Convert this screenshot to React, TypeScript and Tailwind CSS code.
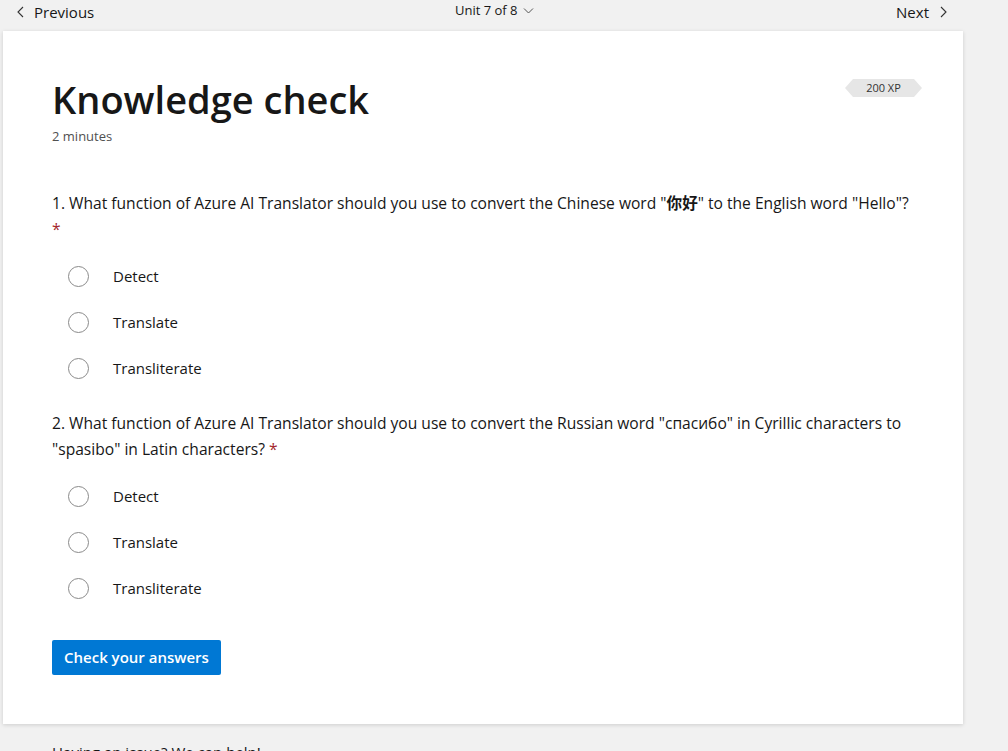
import React from "react";

const font = { fontFamily: '"Open Sans", "Noto Sans CJK SC", sans-serif' };

function Radio({ label }: { label: string }) {
  return (
    <label className="flex items-center h-[46px] pl-[16px]">
      <span className="w-[21px] h-[21px] rounded-full border border-[#8a8a8a] bg-white shrink-0" />
      <span className="ml-[24px] text-[15px] text-[#171717]">{label}</span>
    </label>
  );
}

function Question({ children }: { children: React.ReactNode }) {
  return (
    <div>
      <p className="text-[15.6px] leading-[26px] text-[#171717] font-medium">{children}</p>
      <div className="mt-[12px]">
        <Radio label="Detect" />
        <Radio label="Translate" />
        <Radio label="Transliterate" />
      </div>
    </div>
  );
}

export default function App() {
  return (
    <div className="min-h-[751px] bg-[#f1f1f1] overflow-hidden" style={font}>
      <div className="h-[31px] flex items-start pt-[1px] justify-between pl-[16px] pr-[60px] w-[1008px] relative">
        <div className="flex items-center gap-[8px] text-[15px] text-[#171717] font-medium">
          <svg width="10" height="12" viewBox="0 0 10 12" fill="none" stroke="#333" strokeWidth="1.1">
            <path d="M7 1 L2 6 L7 11" />
          </svg>
          <span>Previous</span>
        </div>
        <div className="absolute left-[455px] top-[1px] flex items-center gap-[5px] text-[13px] text-[#171717]">
          <span>Unit 7 of 8</span>
          <svg width="11" height="8" viewBox="0 0 11 8" fill="none" stroke="#555" strokeWidth="1">
            <path d="M1 1.5 L5.5 6 L10 1.5" />
          </svg>
        </div>
        <div className="flex items-center gap-[9px] text-[15px] text-[#171717] font-medium">
          <span>Next</span>
          <svg width="10" height="12" viewBox="0 0 10 12" fill="none" stroke="#333" strokeWidth="1.1">
            <path d="M3 1 L8 6 L3 11" />
          </svg>
        </div>
      </div>
      <div className="ml-[3px] w-[960px] bg-white shadow-[0_1px_4px_rgba(0,0,0,0.15)] pl-[49px] pr-[41px] pt-[42px] pb-[49px]">
        <div className="flex justify-between items-start">
          <div>
            <h1 className="text-[38px] leading-[52px] font-semibold text-[#171717]">Knowledge check</h1>
            <p className="text-[13px] text-[#505050] mt-[2px]">2 minutes</p>
          </div>
          <div className="mt-[6px] h-[18px] w-[77px] bg-[#e6e6e6] text-[11px] text-[#333] flex items-center justify-center [clip-path:polygon(8px_0,69px_0,77px_50%,69px_100%,8px_100%,0_50%)]">
            200 XP
          </div>
        </div>
        <div className="mt-[43px]">
          <Question>
            1. What function of Azure AI Translator should you use to convert the Chinese word "<span className="font-bold">你好</span>" to the English word "Hello"?<br />
            <span className="text-[#a4262c]">*</span>
          </Question>
        </div>
        <div className="mt-[18px]">
          <Question>
            2. What function of Azure AI Translator should you use to convert the Russian word "спасибо" in Cyrillic characters to "spasibo" in Latin characters? <span className="text-[#a4262c]">*</span>
          </Question>
        </div>
        <button className="mt-[28px] h-[35px] px-[12px] bg-[#0078d4] text-white text-[15px] font-semibold rounded-[2px]">
          Check your answers
        </button>
      </div>
      <p className="ml-[52px] mt-[17px] text-[15px] text-[#171717]">Having an issue? We can help!</p>
    </div>
  );
}
